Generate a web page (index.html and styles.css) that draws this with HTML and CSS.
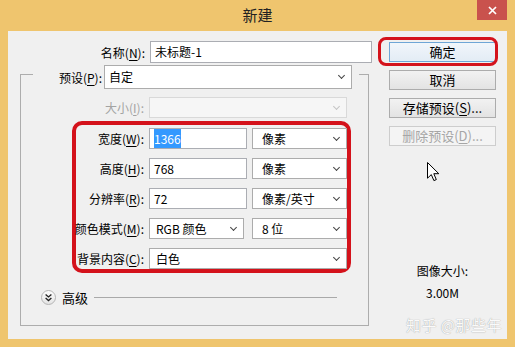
FILE: index.html
```html
<!DOCTYPE html>
<html>
<head>
    <title>新建</title>
    <link rel="stylesheet" href="styles.css">
</head>
<body>
    <div class="window">
        <div class="titlebar">
            <span class="title">新建</span>
            <span class="close">
                <svg width="9" height="9" viewBox="0 0 9 9"><path d="M1 1 L8 8 M8 1 L1 8" stroke="#fff" stroke-width="1.7"/></svg>
            </span>
        </div>

        <div class="client">
            <div class="main">
                <div class="name-row">
                    <span class="lbl name-lbl">名称(<u>N</u>):</span>
                    <div class="field name-field">未标题-1</div>
                </div>

                <div class="group">
                    <div class="preset-row">
                        <span class="lbl preset-lbl">预设(<u>P</u>):</span>
                        <div class="select preset-select">自定</div>
                    </div>

                    <div class="size-row">
                        <span class="lbl size-lbl">大小(<u>I</u>):</span>
                        <div class="select size-select disabled"></div>
                    </div>

                    <!-- red annotation box round the image settings -->
                    <div class="mark-box">
                        <div class="row">
                            <span class="lbl">宽度(<u>W</u>):</span>
                            <div class="field num-field"><span class="sel-text">1366</span></div>
                            <div class="select unit-select">像素</div>
                        </div>
                        <div class="row">
                            <span class="lbl">高度(<u>H</u>):</span>
                            <div class="field num-field">768</div>
                            <div class="select unit-select">像素</div>
                        </div>
                        <div class="row">
                            <span class="lbl">分辨率(<u>R</u>):</span>
                            <div class="field num-field">72</div>
                            <div class="select unit-select">像素/英寸</div>
                        </div>
                        <div class="row">
                            <span class="lbl">颜色模式(<u>M</u>):</span>
                            <div class="select mode-select">RGB 颜色</div>
                            <div class="select unit-select">8 位</div>
                        </div>
                        <div class="row">
                            <span class="lbl">背景内容(<u>C</u>):</span>
                            <div class="select bg-select">白色</div>
                        </div>
                    </div>

                    <div class="advanced">
                        <span class="adv-icon">
                            <svg width="15" height="15" viewBox="0 0 15 15">
                                <path d="M4.6 4.4 L7.5 7 L10.4 4.4 M4.6 8 L7.5 10.6 L10.4 8" fill="none" stroke="#222" stroke-width="1.3"/>
                            </svg>
                        </span>
                        <span class="adv-text">高级</span>
                        <span class="adv-line"></span>
                    </div>
                </div>
            </div>

            <div class="side">
                <div class="buttons">
                    <div class="ok-mark"><div class="btn btn-default">确定</div></div>
                    <div class="btn">取消</div>
                    <div class="btn">存储预设(<u>S</u>)...</div>
                    <div class="btn disabled">删除预设(<u>D</u>)...</div>
                </div>
                <div class="info">
                    <div class="info-label">图像大小:</div>
                    <div class="info-value">3.00M</div>
                </div>
            </div>
        </div>

        <svg class="cursor" width="13" height="20" viewBox="0 0 13 20">
            <path d="M0.5 0.5 L0.5 16.2 L4.3 12.6 L6.9 18.6 L9.3 17.6 L6.8 11.7 L11.8 11.7 Z" fill="#fff" stroke="#000" stroke-width="1"/>
        </svg>

        <div class="watermark">知乎 @那些年</div>
    </div>
</body>
</html>
```

FILE: styles.css
```css
body {
    margin: 0;
    font-family: "Noto Sans CJK SC", "Noto Sans", sans-serif;
    font-size: 12px;
    color: #000;
}

u {
    text-decoration: underline;
    text-underline-offset: 2px;
}

.window {
    position: relative;
    width: 515px;
    height: 347px;
    background-color: #efc56e;
    overflow: hidden;
}

.titlebar {
    display: flex;
    height: 31px;
}

.title {
    flex: 1;
    padding-left: 38px;
    text-align: center;
    line-height: 30px;
    font-size: 15px;
    color: #222;
}

.close {
    display: flex;
    align-items: center;
    justify-content: center;
    width: 30px;
    height: 20px;
    margin-right: 8px;
    background-color: #c9524d;
}

.client {
    display: flex;
    height: 308px;
    margin: 0 8px;
    background-color: #f0f0f0;
}

.main {
    width: 370px;
}

.lbl {
    display: flex;
    justify-content: flex-end;
    white-space: nowrap;
    flex-shrink: 0;
}

.field,
.select {
    box-sizing: border-box;
    background-color: #fff;
    border: 1px solid #abadb3;
    padding-left: 4px;
    white-space: nowrap;
}

.select {
    position: relative;
    border-color: #acacac;
}

.select::after {
    content: "";
    position: absolute;
    right: 7px;
    top: 50%;
    width: 4px;
    height: 4px;
    margin-top: -4px;
    border-right: 1.5px solid #444;
    border-bottom: 1.5px solid #444;
    transform: rotate(45deg);
}

.select.disabled {
    background-color: #f6f6f6;
    border-color: #d9d9d9;
}

.select.disabled::after {
    border-color: #c4c4c4;
}

/* name */
.name-row {
    display: flex;
    align-items: center;
    gap: 5px;
    margin-top: 10px;
}

.name-lbl {
    width: 137px;
}

.name-field {
    width: 222px;
    height: 22px;
    line-height: 20px;
}

/* preset group */
.group {
    box-sizing: border-box;
    width: 349px;
    height: 252px;
    margin-top: 11px;
    margin-left: 12px;
    border: 1px solid #adadad;
}

.preset-row {
    display: flex;
    align-items: center;
    gap: 2px;
    width: 326px;
    margin-top: -10px;
    margin-left: 12px;
    background-color: #f0f0f0;
}

.preset-lbl {
    width: 69px;
}

.preset-select {
    width: 248px;
    height: 24px;
    line-height: 22px;
}

.size-row {
    display: flex;
    align-items: center;
    gap: 5px;
    margin-top: 8px;
}

.size-lbl {
    width: 123px;
    color: #a3a3a3;
}

.size-select {
    width: 198px;
    height: 21px;
}

/* annotation */
.mark-box {
    display: flex;
    flex-direction: column;
    gap: 9px;
    box-sizing: border-box;
    width: 279px;
    margin-top: 3px;
    margin-left: 51px;
    padding-top: 3px;
    border: 4px solid #d4121b;
    border-radius: 10px;
}

.row {
    display: flex;
    align-items: center;
    gap: 5px;
    height: 21px;
}

.row .lbl {
    width: 68px;
}

.row .field,
.row .select {
    height: 21px;
    line-height: 19px;
}

.num-field {
    width: 98px;
}

.sel-text {
    background-color: #3399ff;
    color: #fff;
    padding: 1px 0;
}

.unit-select {
    width: 95px;
    margin-left: auto;
    padding-left: 9px;
}

.mode-select {
    width: 95px;
    padding-left: 6px;
}

.bg-select {
    flex: 1;
    padding-left: 6px;
}

/* advanced */
.advanced {
    display: flex;
    align-items: center;
    gap: 6px;
    height: 16px;
    margin-top: 16px;
    margin-left: 20px;
    margin-right: 31px;
}

.adv-icon {
    display: flex;
    box-sizing: border-box;
    width: 15px;
    height: 15px;
    border: 1px solid #b5b5b5;
    border-radius: 50%;
    background: linear-gradient(#fdfdfd, #e4e4e4);
}

.adv-icon svg {
    margin: -1px;
}

.adv-text {
    font-size: 13px;
}

.adv-line {
    flex: 1;
    height: 1px;
    background-color: #a9a9a9;
}

/* right column */
.side {
    padding-top: 11px;
    padding-left: 11px;
}

.buttons {
    display: flex;
    flex-direction: column;
    gap: 8px;
}

.btn {
    box-sizing: border-box;
    width: 107px;
    height: 20px;
    line-height: 18px;
    text-align: center;
    border: 1px solid #acacac;
    background: linear-gradient(#f2f2f2, #e3e3e3);
    font-size: 13px;
}

.btn-default {
    border-color: #6ea6d6;
    background: linear-gradient(#f1f6fb, #e3ecf5);
}

.btn.disabled {
    color: #a6a6a6;
    border-color: #cdcdcd;
    background: #f4f4f4;
}

.ok-mark {
    position: relative;
}

.ok-mark::after {
    content: "";
    position: absolute;
    top: -5px;
    left: -11px;
    right: -2px;
    bottom: -4px;
    border: 3px solid #d4121b;
    border-radius: 8px;
}

.info {
    width: 107px;
    margin-top: 117px;
    text-align: center;
}

.info-label,
.info-value {
    line-height: 16px;
}

.info-value {
    margin-top: 6px;
}

.cursor {
    position: absolute;
    left: 427px;
    top: 162px;
}

.watermark {
    position: absolute;
    left: 406px;
    top: 314px;
    font-size: 15px;
    letter-spacing: 0.5px;
    color: #fafafa;
    text-shadow: 0 0 1px #8a8a8a;
    white-space: nowrap;
}
```
